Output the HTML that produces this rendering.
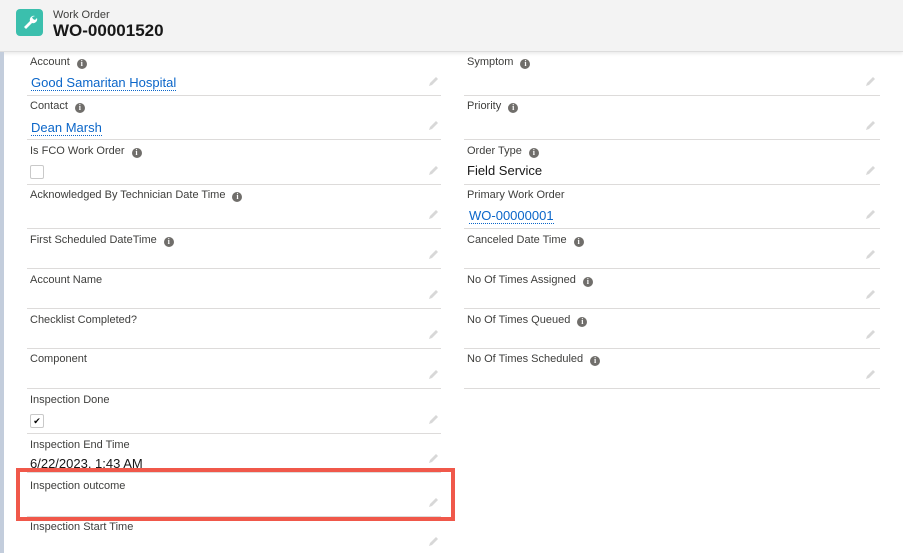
<!DOCTYPE html>
<html><head><style>
body{margin:0;width:903px;height:553px;overflow:hidden;background:#fff;font-family:"Liberation Sans",sans-serif;position:relative}
.hdr{position:absolute;left:0;top:0;width:903px;height:51px;background:#f3f3f3;border-bottom:1px solid #ddd;box-shadow:0 2px 3px rgba(0,0,0,.08)}
.ico{position:absolute;left:16px;top:9px;width:27px;height:27px;background:#3bbfad;border-radius:4px}
.strip{position:absolute;left:0;top:52px;width:4px;height:501px;background:#c3cddc}
.l{position:absolute;font-size:11px;color:#3e3e3c}
.v{position:absolute;font-size:13px;color:#181818}
.a{color:#0b66c9;border-bottom:1px dotted #0b66c9}
.i{display:inline-block;width:10px;height:10px;border-radius:50%;background:#706e6b;color:#fff;font-size:8px;line-height:10px;text-align:center;font-weight:bold;margin-left:7px;vertical-align:-1px;font-family:"Liberation Serif",serif}
.ln{position:absolute;height:1px;background:#dddbda}
.p{position:absolute;width:12px;height:12px}
.cb{position:absolute;width:12px;height:12px;border:1px solid #c9c9c9;border-radius:2px;background:#fff}
</style></head><body>
<div class="hdr"><div class="ico"><svg width="27" height="27" viewBox="0 0 27 27"><path d="M19 7a4 4 0 0 0-5 5l-6 6 2 2 6-6a4 4 0 0 0 5-5l-2 2-2-1-1-2z" fill="#fff"/></svg></div>
<div style="position:absolute;left:53px;top:9px;font-size:11px;color:#3e3e3c">Work Order</div>
<div style="position:absolute;left:53px;top:21px;font-size:17px;font-weight:bold;color:#181818">WO-00001520</div></div>
<div class="strip"></div>

<div class="l" style="left:30px;top:56px">Account<span class="i">i</span></div>
<div class="v" style="left:31px;top:75px"><span class="a">Good Samaritan Hospital</span></div>
<div class="l" style="left:30px;top:100px">Contact<span class="i">i</span></div>
<div class="v" style="left:31px;top:120px"><span class="a">Dean Marsh</span></div>
<div class="l" style="left:30px;top:145px">Is FCO Work Order<span class="i">i</span></div>
<div class="cb" style="left:30px;top:165px"></div>
<div class="l" style="left:30px;top:189px">Acknowledged By Technician Date Time<span class="i">i</span></div>
<div class="l" style="left:30px;top:234px">First Scheduled DateTime<span class="i">i</span></div>
<div class="l" style="left:30px;top:274px">Account Name</div>
<div class="l" style="left:30px;top:314px">Checklist Completed?</div>
<div class="l" style="left:30px;top:353px">Component</div>
<div class="l" style="left:30px;top:394px">Inspection Done</div>
<div class="cb" style="left:30px;top:414px;font-size:9px;line-height:12px;text-align:center">✔</div>
<div class="l" style="left:30px;top:439px">Inspection End Time</div>
<div class="v" style="left:30px;top:456px">6/22/2023, 1:43 AM</div>
<div class="l" style="left:30px;top:480px">Inspection outcome</div>
<div class="l" style="left:30px;top:521px">Inspection Start Time</div>

<div class="l" style="left:467px;top:56px">Symptom<span class="i">i</span></div>
<div class="l" style="left:467px;top:100px">Priority<span class="i">i</span></div>
<div class="l" style="left:467px;top:145px">Order Type<span class="i">i</span></div>
<div class="v" style="left:467px;top:163px">Field Service</div>
<div class="l" style="left:467px;top:189px">Primary Work Order</div>
<div class="v" style="left:469px;top:208px"><span class="a">WO-00000001</span></div>
<div class="l" style="left:467px;top:234px">Canceled Date Time<span class="i">i</span></div>
<div class="l" style="left:467px;top:274px">No Of Times Assigned<span class="i">i</span></div>
<div class="l" style="left:467px;top:314px">No Of Times Queued<span class="i">i</span></div>
<div class="l" style="left:467px;top:353px">No Of Times Scheduled<span class="i">i</span></div>

<div id="lines"></div>
<script>
var L=[95,139,184,228,268,308,348,388,433,472,516],R=[95,139,184,228,268,308,348,388];
var h='';
function pen(x,y){return '<svg class="p" style="left:'+x+'px;top:'+y+'px" viewBox="0 0 12 12"><path d="M2 10l1-3 6-6 2 2-6 6z" fill="#d8d8d8"/></svg>';}
L.forEach(function(y){h+='<div class="ln" style="left:27px;width:414px;top:'+y+'px"></div>'+pen(427,y-19);});
R.forEach(function(y){h+='<div class="ln" style="left:464px;width:416px;top:'+y+'px"></div>'+pen(864,y-19);});
h+=pen(427,536);
document.getElementById('lines').innerHTML=h;
</script>
<div style="position:absolute;left:16px;top:468px;width:431px;height:45px;border:4px solid #f0584a"></div>
</body></html>
